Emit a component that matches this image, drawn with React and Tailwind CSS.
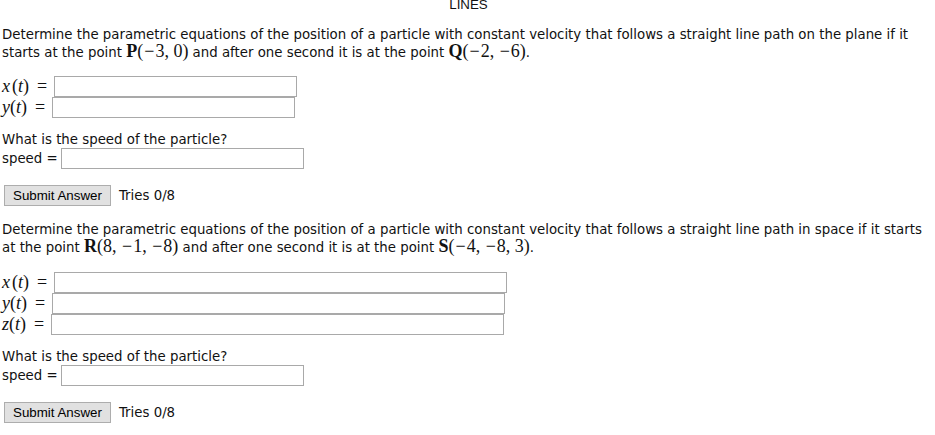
import React from "react";

const Mi = () => <span className="mx-[1px]">−</span>;

const M = ({ children }) => (
  <span className="font-['Liberation_Serif',serif] text-[18px] leading-[0]">{children}</span>
);

const Label = ({ v }) => (
  <span className="font-['Liberation_Serif',serif] text-[18px] whitespace-nowrap flex items-center">
    <i className={v === "x" ? "mr-[2px]" : ""}>{v}</i>(<i>t</i>)
    <span className="ml-[7px] mr-[6px] inline-block w-[12px] text-center">=</span>
  </span>
);

const Row = ({ v, w }) => (
  <div className="flex h-[21px] items-center">
    <Label v={v} />
    <input className={`h-[21px] ${w} border border-[#a9a9a9] bg-white`} />
  </div>
);

const Speed = () => (
  <>
    <div className="h-[16px] leading-[16px]">What is the speed of the particle?</div>
    <div className="flex h-[21px] items-center">
      <span className="mr-[3px]">speed =</span>
      <input className="h-[21px] w-[243px] border border-[#a9a9a9] bg-white" />
    </div>
  </>
);

const Submit = () => (
  <div className="flex items-center h-[21px] mt-[16px]">
    <button className="ml-[2px] h-[21px] px-[8px] border border-[#adadad] bg-[#e1e1e1] font-['Liberation_Sans',Arial,sans-serif] text-[13.33px] text-black">
      Submit Answer
    </button>
    <span className="ml-[8px]">Tries 0/8</span>
  </div>
);

export default function App() {
  return (
    <div className="w-[935px] h-[435px] overflow-hidden bg-white text-[13.33px] text-[#111] font-['DejaVu_Sans',Verdana,sans-serif] pl-[2px]">
      <div className="-mt-[3px] leading-[15px] text-center font-['Liberation_Sans',Arial,sans-serif] text-[13.33px]">
        LINES
      </div>
      <p className="mt-[14px] leading-[18px]">
        Determine the parametric equations of the position of a particle with constant velocity that follows a straight line path on the plane if it starts at the point{" "}
        <M><b>P</b>(<Mi />3, 0)</M> and after one second it is at the point{" "}
        <M><b>Q</b>(<Mi />2, <Mi />6)</M>.
      </p>
      <div className="mt-[14px]">
        <Row v="x" w="w-[243px]" />
        <Row v="y" w="w-[243px]" />
      </div>
      <div className="mt-[14px]">
        <Speed />
      </div>
      <Submit />
      <p className="mt-[15px] leading-[18px]">
        Determine the parametric equations of the position of a particle with constant velocity that follows a straight line path in space if it starts at the point{" "}
        <M><b>R</b>(8, <Mi />1, <Mi />8)</M> and after one second it is at the point{" "}
        <M><b>S</b>(<Mi />4, <Mi />8, 3)</M>.
      </p>
      <div className="mt-[15px]">
        <Row v="x" w="w-[453px]" />
        <Row v="y" w="w-[453px]" />
        <Row v="z" w="w-[453px]" />
      </div>
      <div className="mt-[14px]">
        <Speed />
      </div>
      <Submit />
    </div>
  );
}
